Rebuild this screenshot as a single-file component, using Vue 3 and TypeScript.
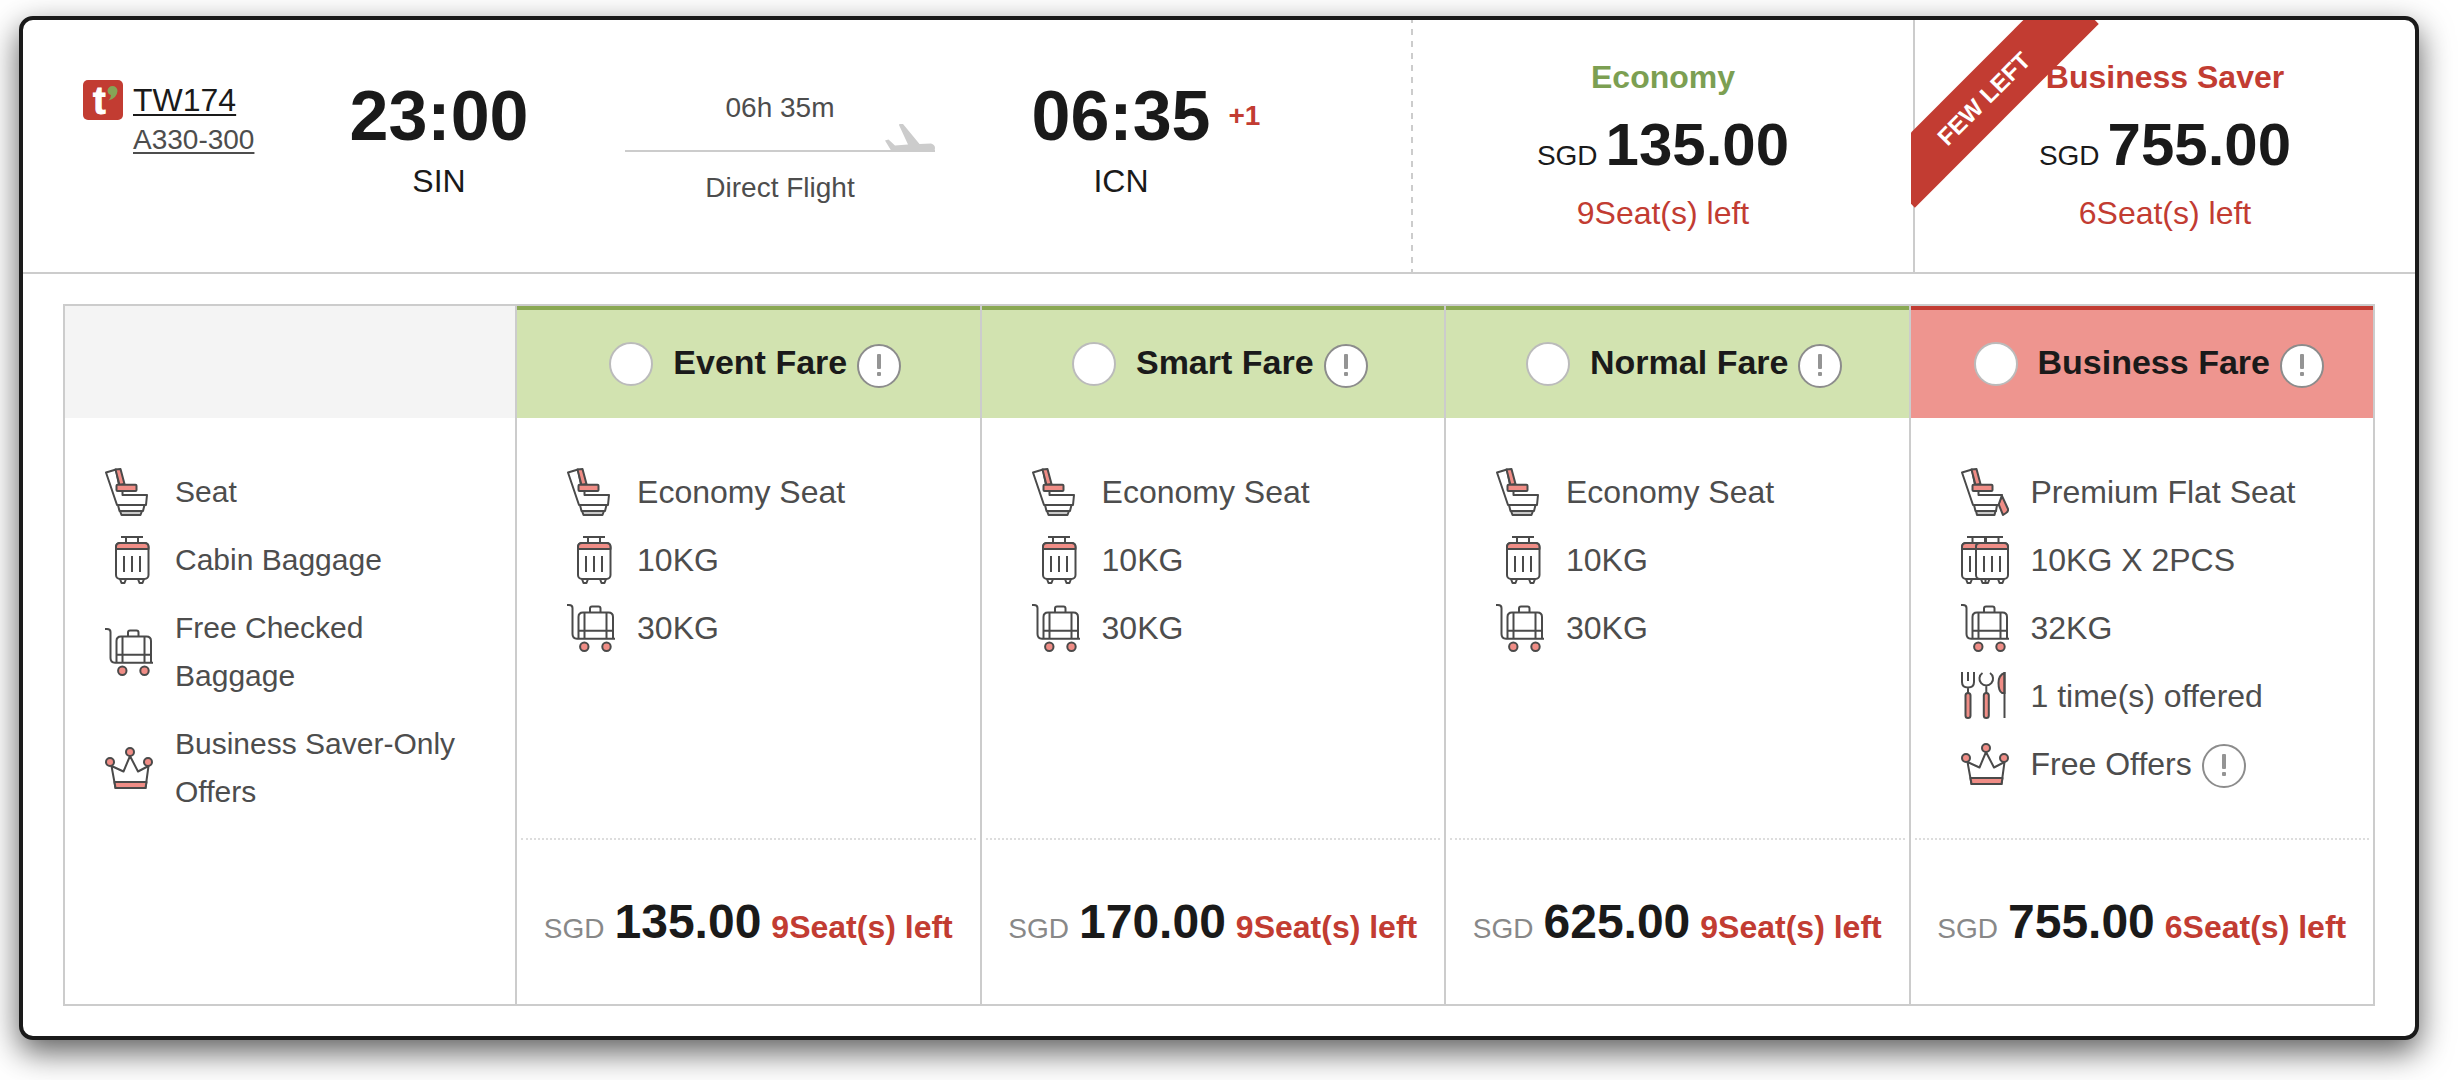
<script setup lang="ts">
import { ref } from 'vue'

type IconName = 'seat' | 'flat-seat' | 'bag' | 'double-bag' | 'trolley' | 'cutlery' | 'crown'

interface Feature {
  icon: IconName
  text: string
  info?: boolean
}

interface Fare {
  id: string
  name: string
  tone: 'economy' | 'business'
  features: Feature[]
  price: string
  seats: number
}

interface Cabin {
  name: string
  tone: 'economy' | 'business'
  price: string
  seats: number
  ribbon?: string
}

const currency = 'SGD'
const selectedFare = ref<string>('')

const cabins: Cabin[] = [
  { name: 'Economy', tone: 'economy', price: '135.00', seats: 9 },
  { name: 'Business Saver', tone: 'business', price: '755.00', seats: 6, ribbon: 'FEW LEFT' },
]

const labels: Feature[] = [
  { icon: 'seat', text: 'Seat' },
  { icon: 'bag', text: 'Cabin Baggage' },
  { icon: 'trolley', text: 'Free Checked Baggage' },
  { icon: 'crown', text: 'Business Saver-Only Offers' },
]

const economyFeatures: Feature[] = [
  { icon: 'seat', text: 'Economy Seat' },
  { icon: 'bag', text: '10KG' },
  { icon: 'trolley', text: '30KG' },
]

const fares: Fare[] = [
  { id: 'event', name: 'Event Fare', tone: 'economy', features: economyFeatures, price: '135.00', seats: 9 },
  { id: 'smart', name: 'Smart Fare', tone: 'economy', features: economyFeatures, price: '170.00', seats: 9 },
  { id: 'normal', name: 'Normal Fare', tone: 'economy', features: economyFeatures, price: '625.00', seats: 9 },
  {
    id: 'business',
    name: 'Business Fare',
    tone: 'business',
    features: [
      { icon: 'flat-seat', text: 'Premium Flat Seat' },
      { icon: 'double-bag', text: '10KG X 2PCS' },
      { icon: 'trolley', text: '32KG' },
      { icon: 'cutlery', text: '1 time(s) offered' },
      { icon: 'crown', text: 'Free Offers', info: true },
    ],
    price: '755.00',
    seats: 6,
  },
]
</script>

<template>
  <svg class="sprite" aria-hidden="true">
    <symbol id="seat" viewBox="0 0 48 48">
      <g fill="#fff" stroke="#4a4a4a" stroke-width="2" stroke-linejoin="round">
        <path d="M11 1.500L1 4.500L12 37H41L42 27H17.500V23L14 17z" />
        <path d="M10.500 1.500L15.500 1L19.500 16L14.500 17z" fill="#f08d86" />
        <rect x="11.500" y="16.800" width="20" height="6.200" rx="1" fill="#f08d86" />
        <path d="M13 37H39.500L38 43H14.500z" />
        <path d="M15 43H37L35.500 47H16.500z" fill="#c9c9c9" />
      </g>
    </symbol>
    <symbol id="flat-seat" viewBox="0 0 48 48">
      <g fill="#fff" stroke="#4a4a4a" stroke-width="2" stroke-linejoin="round">
        <path d="M41 28L47 41Q47.500 43.500 45 45L42 47L37.500 36z" fill="#f08d86" />
        <path d="M11 1.500L1 4.500L12 37H37.500L41 27H17.500V23L14 17z" />
        <path d="M10.500 1.500L15.500 1L19.500 16L14.500 17z" fill="#f08d86" />
        <rect x="11.500" y="16.800" width="20" height="6.200" rx="1" fill="#f08d86" />
        <path d="M13 37H36L35 43H14.500z" />
        <path d="M15 43H34.500L33.500 47H16z" fill="#c9c9c9" />
      </g>
    </symbol>
    <symbol id="bag" viewBox="0 0 48 48">
      <g fill="none" stroke="#4a4a4a" stroke-width="2" stroke-linejoin="round">
        <path d="M16 1H38M21 1V7M33 1V7" />
        <path d="M15 43L16.500 47H19.500L21 43M33 43L34.500 47H37.500L39 43" />
        <rect x="11" y="7" width="32.500" height="36" rx="4" fill="#fff" />
        <path d="M11 13V11Q11 7 15 7H39.500Q43.500 7 43.500 11V13z" fill="#f08d86" />
        <path d="M19 20V36M27 20V36M35 20V36" />
      </g>
    </symbol>
    <symbol id="double-bag" viewBox="0 0 48 48">
      <g fill="none" stroke="#4a4a4a" stroke-width="2" stroke-linejoin="round">
        <path d="M6 1H42M11.500 1V7M37.500 1V7" />
        <path d="M24.500 1V7" stroke-width="3" />
        <path d="M5 43L6.500 47H9.500L11 43M20 43L21.500 47H27L28.500 43M24.500 43V47M37 43L38.500 47H41.500L43 43" />
        <rect x="1" y="7" width="24" height="36" rx="4" fill="#fff" />
        <path d="M1 13V11Q1 7 5 7H24V13z" fill="#f08d86" />
        <rect x="15" y="7" width="32" height="36" rx="4" fill="#fff" />
        <path d="M15 13V11Q15 7 19 7H43Q47 7 47 11V13z" fill="#f08d86" />
        <path d="M9 20V36M23 20V36M31 20V36M39 20V36" />
      </g>
    </symbol>
    <symbol id="trolley" viewBox="0 0 48 48">
      <g fill="none" stroke="#4a4a4a" stroke-width="2">
        <path d="M0 1H2Q5.500 1 5.500 4V30Q5.500 34.700 10 34.700H48" />
        <path d="M11.500 34.500V13Q11.500 8.500 16 8.500H41.500Q46 8.500 46 13V34.500" />
        <path d="M17.500 8.500V34.500M39.500 8.500V34.500M11.500 26.700H46" />
        <path d="M23 8.500V4.500Q23 2.500 25 2.500H31.500Q33.500 2.500 33.500 4.500V8.500" />
        <circle cx="17.300" cy="42.800" r="4.200" fill="#f08d86" />
        <circle cx="39.500" cy="42.800" r="4.200" fill="#f08d86" />
      </g>
    </symbol>
    <symbol id="cutlery" viewBox="0 0 48 48">
      <g fill="none" stroke="#4a4a4a" stroke-width="2">
        <path d="M1 0V10Q1 15.500 7 15.500Q13 15.500 13 10V0M7 0V9M7 15.500V21" />
        <rect x="4.500" y="21" width="5" height="25" rx="2.500" fill="#f08d86" />
        <path d="M21.500 1A6.800 6.800 0 1 0 29 1M25.300 14V21" />
        <rect x="22.800" y="21" width="5" height="25" rx="2.500" fill="#f08d86" />
        <path d="M43.500 1Q37.500 3 37.500 11Q37.500 19 41 21H43.500z" fill="#f08d86" />
        <path d="M43.500 0V46" />
      </g>
    </symbol>
    <symbol id="crown" viewBox="0 0 48 48">
      <g fill="none" stroke="#4a4a4a" stroke-width="2" stroke-linejoin="round">
        <path d="M6.500 22L10.500 44H40.500L43.500 22L33 27.500L25 12L18.500 27.500z" fill="#fff" />
        <path d="M9.500 38H41.500L40.500 44H10.500z" fill="#f08d86" />
        <circle cx="5" cy="18" r="4" fill="#f08d86" />
        <circle cx="25" cy="8" r="4" fill="#f08d86" />
        <circle cx="43" cy="18" r="4" fill="#f08d86" />
      </g>
    </symbol>
    <symbol id="info" viewBox="0 0 44 44">
      <circle cx="22" cy="22" r="21" fill="#fff" stroke="#8c8c8c" stroke-width="2" />
      <rect x="20" y="10" width="4" height="15" rx="1" fill="#949494" />
      <rect x="20" y="28" width="4" height="4" rx="1" fill="#949494" />
    </symbol>
  </svg>

  <main class="card">
    <section class="summary">
      <div class="flight">
        <div class="airline">
          <svg class="logo" viewBox="0 0 40 40" role="img" aria-label="t'way">
            <rect width="40" height="40" rx="5" fill="#c23c32" />
            <text x="10" y="34" class="logo-letter">t</text>
            <path d="M29.500 6A5 5 0 0 0 24.500 11Q25 14.500 28 15Q28 18 25.500 20.500Q34 18 34.500 11A5 5 0 0 0 29.500 6z" fill="#86a556" />
          </svg>
          <div class="codes">
            <a class="flight-no" href="#flight">TW174</a>
            <a class="aircraft" href="#aircraft">A330-300</a>
          </div>
        </div>
        <div class="stop">
          <strong class="time">23:00</strong>
          <span class="airport">SIN</span>
        </div>
        <div class="route">
          <span class="route-text">06h 35m</span>
          <div class="track">
            <svg class="plane" viewBox="0 0 50 28" aria-hidden="true">
              <path d="M0 16.500L3.500 15.500L10 21.500L23 20.500L14 1L14.500 0H18L34.500 20L46 19.500Q50 20.500 50 24Q50 28 46 28H7z" fill="#ccc" />
            </svg>
          </div>
          <span class="route-text">Direct Flight</span>
        </div>
        <div class="stop">
          <strong class="time">06:35<span class="next-day">+1</span></strong>
          <span class="airport">ICN</span>
        </div>
      </div>

      <div v-for="cabin in cabins" :key="cabin.name" class="cabin" :class="cabin.tone">
        <h2 class="cabin-name">{{ cabin.name }}</h2>
        <p class="cabin-price">
          <span class="currency">{{ currency }}</span>
          <strong class="amount">{{ cabin.price }}</strong>
        </p>
        <p class="cabin-seats">{{ cabin.seats }}Seat(s) left</p>
        <div v-if="cabin.ribbon" class="ribbon-clip">
          <span class="ribbon">{{ cabin.ribbon }}</span>
        </div>
      </div>
    </section>

    <section class="fares">
      <table class="fare-table">
        <colgroup>
          <col class="label-col" />
          <col v-for="fare in fares" :key="fare.id" />
        </colgroup>
        <thead>
          <tr>
            <td class="corner"></td>
            <th v-for="fare in fares" :key="fare.id" class="fare-head" :class="fare.tone" scope="col">
              <div class="fare-title">
                <input :id="fare.id" v-model="selectedFare" class="radio" type="radio" name="fare" :value="fare.id" />
                <label class="fare-name" :for="fare.id">{{ fare.name }}</label>
                <button class="info" type="button" :aria-label="`About ${fare.name}`">
                  <svg class="info-icon"><use href="#info" /></svg>
                </button>
              </div>
            </th>
          </tr>
        </thead>
        <tbody>
          <tr>
            <td class="cell labels" rowspan="2">
              <ul class="features">
                <li v-for="item in labels" :key="item.text" class="feature">
                  <svg class="icon" aria-hidden="true"><use :href="`#${item.icon}`" /></svg>
                  <span>{{ item.text }}</span>
                </li>
              </ul>
            </td>
            <td v-for="fare in fares" :key="fare.id" class="cell offer">
              <ul class="features">
                <li v-for="item in fare.features" :key="item.text" class="feature">
                  <svg class="icon" aria-hidden="true"><use :href="`#${item.icon}`" /></svg>
                  <span>{{ item.text }}</span>
                  <button v-if="item.info" class="info" type="button" :aria-label="`About ${item.text}`">
                    <svg class="info-icon"><use href="#info" /></svg>
                  </button>
                </li>
              </ul>
            </td>
          </tr>
          <tr>
            <td v-for="fare in fares" :key="fare.id" class="price-cell">
              <div class="price-row">
                <span class="currency muted">{{ currency }}</span>
                <strong class="fare-amount">{{ fare.price }}</strong>
                <strong class="fare-seats">{{ fare.seats }}Seat(s) left</strong>
              </div>
            </td>
          </tr>
        </tbody>
      </table>
    </section>
  </main>
</template>

<style>
body {
  margin: 0;
  background: #fff;
}
</style>

<style scoped>
.sprite {
  position: absolute;
  width: 0;
  height: 0;
}

.card {
  box-sizing: border-box;
  margin: 16px 39px 40px 19px;
  border: 4px solid #1a1a1a;
  border-radius: 14px;
  background: #fff;
  box-shadow: 0 12px 32px rgba(0, 0, 0, 0.64);
  color: #1a1a1a;
  font-family: 'Liberation Sans', Arial, Helvetica, sans-serif;
  font-size: 32px;
  line-height: 40px;
}

.summary {
  display: grid;
  grid-template-columns: 1388fr 502fr 502fr;
  border-bottom: 2px solid #ccc;
}

.flight {
  display: grid;
  grid-template-columns: 220fr 272fr 410fr 272fr 154fr;
  padding-left: 60px;
}

.airline {
  display: flex;
  gap: 10px;
  padding-top: 60px;
}

.logo {
  flex: none;
  width: 40px;
  height: 40px;
  overflow: visible;
}

.logo-letter {
  fill: #fff;
  stroke: #fff;
  stroke-width: 1px;
  font-size: 38px;
  font-weight: 700;
}

.codes {
  display: flex;
  flex-direction: column;
  align-items: flex-start;
}

.flight-no,
.aircraft {
  color: #1a1a1a;
  text-decoration: underline;
  text-decoration-thickness: 2px;
  text-underline-offset: 3px;
}

.aircraft {
  color: #4d4d4d;
  font-size: 28px;
}

.stop {
  display: flex;
  flex-direction: column;
  align-items: center;
  gap: 5px;
  padding-top: 56px;
}

.time {
  position: relative;
  font-size: 70px;
  line-height: 80px;
}

.next-day {
  position: absolute;
  top: 20px;
  left: 100%;
  margin-left: 18px;
  color: #c23c32;
  font-size: 28px;
  line-height: 40px;
}

.route {
  display: flex;
  flex-direction: column;
  padding: 72px 50px 0;
}

.route-text {
  color: #4d4d4d;
  font-size: 28px;
  line-height: 32px;
  text-align: center;
}

.track {
  display: flex;
  justify-content: flex-end;
  box-sizing: border-box;
  height: 28px;
  margin-bottom: 20px;
  border-bottom: 2px solid #ccc;
}

.plane {
  width: 50px;
  height: 28px;
}

.cabin {
  position: relative;
  display: flex;
  flex-direction: column;
  align-items: center;
  gap: 14px;
  padding: 37px 0 39px;
  border-left: 2px solid #ccc;
}

.cabin.economy {
  border-left-color: transparent;
  background: repeating-linear-gradient(#ccc 0 3px, transparent 3px 9px, #ccc 9px 12px) left top / 2px 100% no-repeat border-box;
}

.cabin-name {
  margin: 0;
  font-size: 32px;
}

.economy .cabin-name {
  color: #7c9f52;
}

.business .cabin-name {
  color: #c23c32;
}

.cabin-price {
  display: flex;
  align-items: baseline;
  gap: 8px;
  margin: 0;
  line-height: 68px;
}

.currency {
  font-size: 28px;
  line-height: 32px;
}

.amount {
  font-size: 60px;
}

.cabin-seats {
  margin: 0;
  color: #c23c32;
}

.ribbon-clip {
  position: absolute;
  top: 0;
  left: -4px;
  width: 192px;
  height: 192px;
  overflow: hidden;
}

.ribbon {
  position: absolute;
  top: 48px;
  left: -54px;
  box-sizing: border-box;
  width: 260px;
  padding-right: 8px;
  background: #c23c32;
  color: #fff;
  font-size: 24px;
  font-weight: 700;
  line-height: 56px;
  text-align: center;
  transform: rotate(-45deg);
}

.fares {
  padding: 30px 40px;
}

.fare-table {
  width: 100%;
  border: 2px solid #ccc;
  border-collapse: separate;
  border-spacing: 0;
  table-layout: fixed;
}

.label-col {
  width: 19.5%;
}

.corner {
  padding: 0;
  background: #f4f4f4;
}

.fare-head {
  height: 108px;
  padding: 4px 0 0 14px;
  border-left: 2px solid #ccc;
}

.fare-head.economy {
  background: #d2e3b0;
  box-shadow: inset 0 4px #8aa853;
}

.fare-head.business {
  background: #ee958f;
  box-shadow: inset 0 4px #c23c32;
}

.fare-title {
  display: flex;
  align-items: center;
  justify-content: center;
}

.radio {
  flex: none;
  box-sizing: border-box;
  width: 44px;
  height: 44px;
  margin: 0 20px 0 0;
  border: 2px solid #bbb;
  border-radius: 50%;
  appearance: none;
  background: #fff;
}

.radio:checked {
  border: 12px solid #c23c32;
}

.fare-name {
  padding-bottom: 4px;
  font-size: 34px;
  line-height: 44px;
}

.info {
  flex: none;
  width: 44px;
  height: 44px;
  margin: 4px 0 0 10px;
  padding: 0;
  border: 0;
  background: none;
  cursor: pointer;
}

.info-icon {
  display: block;
  width: 44px;
  height: 44px;
}

.cell {
  padding: 50px;
  vertical-align: top;
}

.labels {
  padding: 50px 38px 50px 40px;
  font-size: 30px;
}

.offer {
  padding-right: 20px;
  border-left: 2px solid #ccc;
}

.features {
  display: flex;
  flex-direction: column;
  gap: 20px;
  margin: 0;
  padding: 0;
  color: #4d4d4d;
  line-height: 48px;
  list-style: none;
}

.feature {
  display: flex;
  align-items: center;
}

.icon {
  flex: none;
  width: 48px;
  height: 48px;
  margin-right: 22px;
}

.price-cell {
  padding: 0 4px;
  border-left: 2px solid #ccc;
}

.price-row {
  display: flex;
  align-items: baseline;
  justify-content: center;
  gap: 10px;
  padding: 50px 0;
  border-top: 2px dotted #ddd;
  line-height: 64px;
  white-space: nowrap;
}

.muted {
  color: #888;
}

.fare-amount {
  font-size: 48px;
}

.fare-seats {
  color: #c23c32;
  line-height: 40px;
}
</style>
